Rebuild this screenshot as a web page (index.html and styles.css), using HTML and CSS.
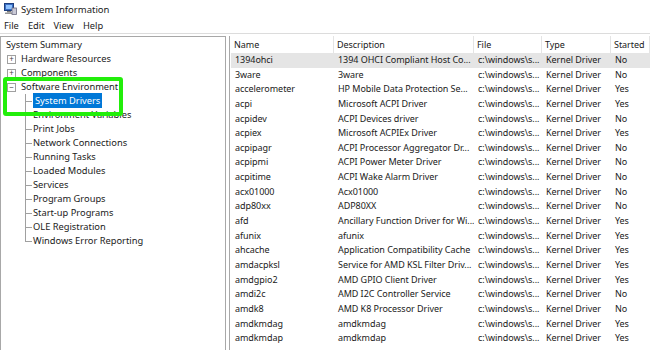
FILE: index.html
```html
<!DOCTYPE html>
<html lang="en">
  <head>
    <meta charset="UTF-8" />
    <title>System Information</title>
    <link rel="stylesheet" href="styles.css">
  </head>
  <body>
    <div class="titlebar">
      <svg class="app-icon" width="13" height="12" viewBox="0 0 13 12">
        <rect x="0.5" y="0.5" width="9" height="7" fill="#3a6fc4" stroke="#1d3f80" />
        <rect x="2" y="2" width="6" height="4" fill="#8fc2ff" />
        <rect x="3" y="8" width="4" height="1.5" fill="#777" />
        <rect x="1" y="9.5" width="8" height="1.5" fill="#999" />
        <rect x="8" y="5" width="4.5" height="6.5" fill="#c9c9d6" stroke="#6a6a80" stroke-width="0.8" />
      </svg>
      <span>System Information</span>
    </div>

    <div class="menubar">
      <span>File</span>
      <span>Edit</span>
      <span>View</span>
      <span>Help</span>
    </div>

    <div class="main">
      <div class="tree">
        <div class="node root">System Summary</div>
        <div class="node top"><span class="box">+</span>Hardware Resources</div>
        <div class="node top"><span class="box">+</span>Components</div>
        <div class="node top"><span class="box">&minus;</span>Software Environment</div>
        <div class="children">
          <div class="leaf"><span class="sel">System Drivers</span></div>
          <div class="leaf">Environment Variables</div>
          <div class="leaf">Print Jobs</div>
          <div class="leaf">Network Connections</div>
          <div class="leaf">Running Tasks</div>
          <div class="leaf">Loaded Modules</div>
          <div class="leaf">Services</div>
          <div class="leaf">Program Groups</div>
          <div class="leaf">Start-up Programs</div>
          <div class="leaf">OLE Registration</div>
          <div class="leaf last">Windows Error Reporting</div>
        </div>
        <div class="highlight"></div>
      </div>

      <div class="list">
        <div class="row head">
          <div>Name</div>
          <div>Description</div>
          <div>File</div>
          <div>Type</div>
          <div>Started</div>
        </div>
        <div id="rows"></div>
      </div>
    </div>

    <script>
      const drivers = [
        ["1394ohci", "1394 OHCI Compliant Host Co...", "No"],
        ["3ware", "3ware", "No"],
        ["accelerometer", "HP Mobile Data Protection Se...", "Yes"],
        ["acpi", "Microsoft ACPI Driver", "Yes"],
        ["acpidev", "ACPI Devices driver", "No"],
        ["acpiex", "Microsoft ACPIEx Driver", "Yes"],
        ["acpipagr", "ACPI Processor Aggregator Dr...", "No"],
        ["acpipmi", "ACPI Power Meter Driver", "No"],
        ["acpitime", "ACPI Wake Alarm Driver", "No"],
        ["acx01000", "Acx01000", "No"],
        ["adp80xx", "ADP80XX", "No"],
        ["afd", "Ancillary Function Driver for Wi...", "Yes"],
        ["afunix", "afunix", "Yes"],
        ["ahcache", "Application Compatibility Cache", "Yes"],
        ["amdacpksl", "Service for AMD KSL Filter Driv...", "Yes"],
        ["amdgpio2", "AMD GPIO Client Driver", "Yes"],
        ["amdi2c", "AMD I2C Controller Service", "No"],
        ["amdk8", "AMD K8 Processor Driver", "No"],
        ["amdkmdag", "amdkmdag", "Yes"],
        ["amdkmdap", "amdkmdap", "Yes"],
      ];

      const rows = document.getElementById("rows");

      drivers.forEach((d, i) => {
        let row = document.createElement("div");
        row.classList.add("row");
        if (i === 0) row.classList.add("current");
        [d[0], d[1], "c:\\windows\\s...", "Kernel Driver", d[2]].forEach((text) => {
          let cell = document.createElement("div");
          cell.innerText = text;
          row.appendChild(cell);
        });
        rows.appendChild(row);
      });
    </script>
  </body>
</html>
```

FILE: styles.css
```css
* {
  margin: 0;
  padding: 0;
  box-sizing: border-box;
}

body {
  font-family: "Noto Sans", "Open Sans", sans-serif;
  font-size: 9.3px;
  color: #1a1a1a;
  background: #fff;
  width: 650px;
  height: 350px;
  overflow: hidden;
}

.titlebar {
  display: flex;
  align-items: center;
  gap: 4px;
  height: 18px;
  padding-left: 4px;
  font-size: 9.5px;
}

.menubar {
  display: flex;
  gap: 9px;
  height: 14px;
  align-items: center;
  padding-left: 4px;
}

.main {
  display: flex;
  gap: 3px;
  border-top: 1px solid #dcdcdc;
  margin-top: 1px;
  padding-top: 2px;
  height: 317px;
}

/* left tree */

.tree {
  position: relative;
  width: 226px;
  border: 1px solid #a8a8a8;
  border-bottom: none;
  padding: 1px 0 0 5px;
}

.node,
.leaf {
  height: 14px;
  line-height: 14px;
  white-space: nowrap;
}

.top {
  display: flex;
  align-items: center;
}

.box {
  display: inline-flex;
  justify-content: center;
  align-items: center;
  width: 9px;
  height: 9px;
  border: 1px solid #a0a0a0;
  font-size: 8px;
  line-height: 1;
  color: #444;
  margin: 0 5px 0 1px;
}

.children {
  margin-left: 19px;
}

.leaf {
  position: relative;
  padding-left: 7px;
  border-left: 1px solid #a0a0a0;
}

.leaf::before {
  content: "";
  position: absolute;
  left: 0;
  top: 7px;
  width: 6px;
  border-top: 1px solid #a0a0a0;
}

.leaf.last {
  border-left-color: transparent;
}

.leaf.last::after {
  content: "";
  position: absolute;
  left: -1px;
  top: 0;
  height: 8px;
  border-left: 1px solid #a0a0a0;
}

.sel {
  background: #0078d7;
  color: #fff;
  padding: 1px 2px;
}

.highlight {
  position: absolute;
  left: 2px;
  top: 40px;
  width: 120px;
  height: 39px;
  border: 4px solid #22ee0a;
  border-radius: 3px;
}

/* right list */

.list {
  flex: 1;
  border-left: 1px solid #a8a8a8;
  padding-left: 1px;
  font-size: 9px;
  letter-spacing: -0.05px;
}

.row {
  display: grid;
  grid-template-columns: 103px 140px 68px 69px 1fr;
  height: 14.65px;
  line-height: 14.65px;
  white-space: nowrap;
}

.row div {
  padding-left: 4px;
  overflow: hidden;
}

.head {
  height: 17px;
  line-height: 17px;
}

.head div {
  border-right: 1px solid #e4e4e4;
  padding-left: 3px;
}

.current {
  background: #e5e5e5;
}
```
